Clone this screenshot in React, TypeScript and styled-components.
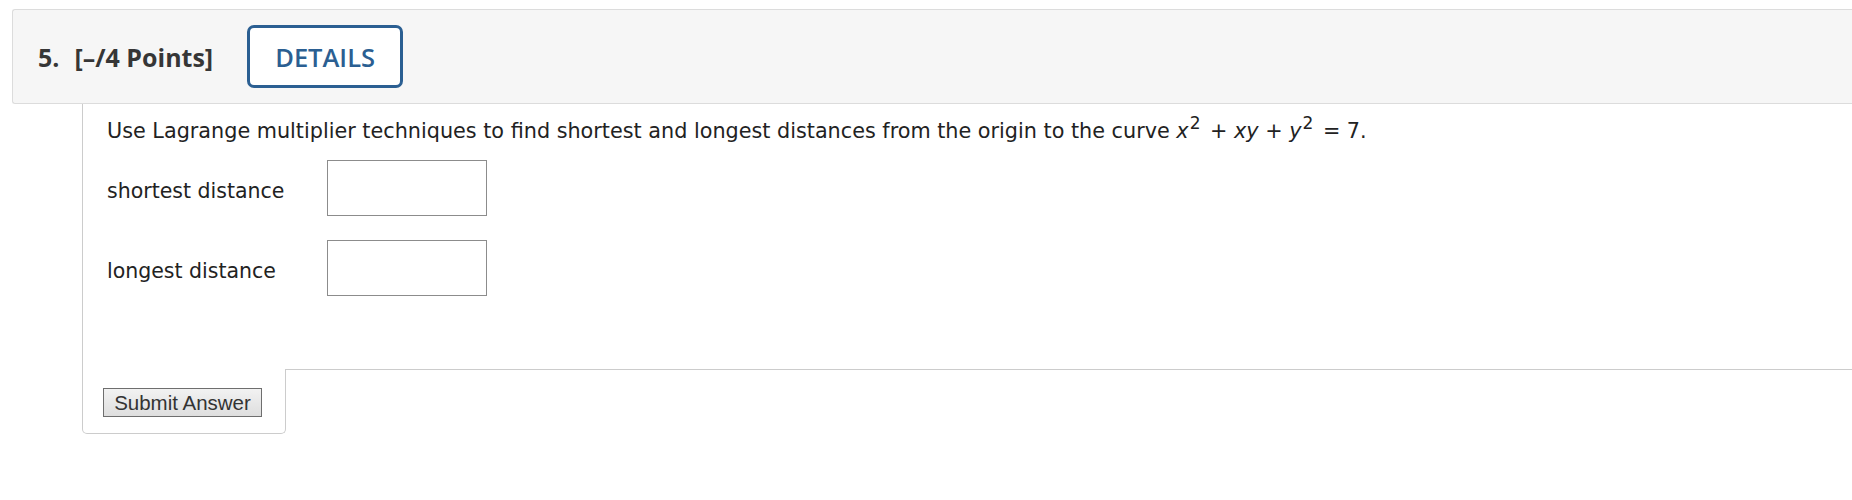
import React from "react";
import styled, { createGlobalStyle } from "styled-components";

const GlobalStyle = createGlobalStyle`
  html, body {
    margin: 0;
    padding: 0;
    background: #fff;
  }
`;

const Page = styled.div`
  padding: 9px 0 0 12px;
  width: 1852px;
  box-sizing: border-box;
`;

const Header = styled.div`
  display: flex;
  align-items: center;
  height: 95px;
  box-sizing: border-box;
  padding-left: 25px;
  background: #f6f6f6;
  border: 1px solid #dcdcdc;
  border-right: 0;
  border-radius: 3px 0 0 3px;
  font-family: "Open Sans", "Liberation Sans", sans-serif;
`;

const Number = styled.span`
  font-size: 25px;
  font-weight: 700;
  color: #363636;
`;

const Points = styled.span`
  margin-left: 15px;
  font-size: 25px;
  font-weight: 700;
  color: #363636;
`;

const DetailsButton = styled.button`
  margin-left: 34px;
  width: 156px;
  height: 63px;
  box-sizing: border-box;
  background: #fff;
  border: 3px solid #2b5f92;
  border-radius: 7px;
  font-family: "Open Sans", "Liberation Sans", sans-serif;
  font-size: 25.5px;
  font-weight: 600;
  color: #2b5f92;
  cursor: pointer;
`;

const Body = styled.div`
  margin-left: 70px;
  font-family: Verdana, "DejaVu Sans", sans-serif;
  color: #222;
`;

const Question = styled.div`
  border-left: 1px solid #cccccc;
  padding: 14px 24px 73px;
`;

const Prompt = styled.p`
  margin: 0 0 15px;
  font-size: 20.75px;
  line-height: 27px;
  white-space: nowrap;

  i {
    font-style: italic;
  }
  sup {
    font-size: 17px;
    line-height: 0;
    vertical-align: 9px;
    margin: 0 3px 0 1px;
  }
`;

const Answers = styled.div`
  display: grid;
  grid-template-columns: 220px 160px;
  row-gap: 24px;
  align-items: center;
`;

const Label = styled.label`
  font-size: 20.5px;
  padding-top: 6px;
`;

const AnswerInput = styled.input`
  width: 160px;
  height: 56px;
  box-sizing: border-box;
  border: 1px solid #8c8c8c;
  border-radius: 0;
  background: #fff;
  font-size: 18px;
  padding: 0 8px;
  outline: none;
`;

const Footer = styled.div`
  display: flex;
  align-items: flex-start;
`;

const SubmitCell = styled.div`
  width: 204px;
  height: 65px;
  box-sizing: border-box;
  padding: 19px 0 0 20px;
  border: 1px solid #cccccc;
  border-top: 0;
  border-radius: 0 0 5px 5px;
`;

const SubmitButton = styled.button`
  width: 159px;
  height: 29px;
  box-sizing: border-box;
  padding: 0;
  border: 1px solid #6e6e6e;
  border-radius: 0;
  background: linear-gradient(#f2f2f2, #dedede);
  font-family: "Liberation Sans", Arial, sans-serif;
  font-size: 20.5px;
  color: #333;
  cursor: pointer;
`;

const FooterRest = styled.div`
  flex: 1;
  border-top: 1px solid #cccccc;
  margin-left: -1px;
`;

export default function App() {
  return (
    <>
      <GlobalStyle />
      <Page>
        <Header>
          <Number>5.</Number>
          <Points>[–/4 Points]</Points>
          <DetailsButton>DETAILS</DetailsButton>
        </Header>
        <Body>
          <Question>
            <Prompt>
              Use Lagrange multiplier techniques to find shortest and longest distances from the
              origin to the curve <i>x</i>
              <sup>2</sup> + <i>xy</i> + <i>y</i>
              <sup>2</sup> = 7.
            </Prompt>
            <Answers>
              <Label htmlFor="shortest">shortest distance</Label>
              <AnswerInput id="shortest" type="text" />
              <Label htmlFor="longest">longest distance</Label>
              <AnswerInput id="longest" type="text" />
            </Answers>
          </Question>
          <Footer>
            <SubmitCell>
              <SubmitButton>Submit Answer</SubmitButton>
            </SubmitCell>
            <FooterRest />
          </Footer>
        </Body>
      </Page>
    </>
  );
}
